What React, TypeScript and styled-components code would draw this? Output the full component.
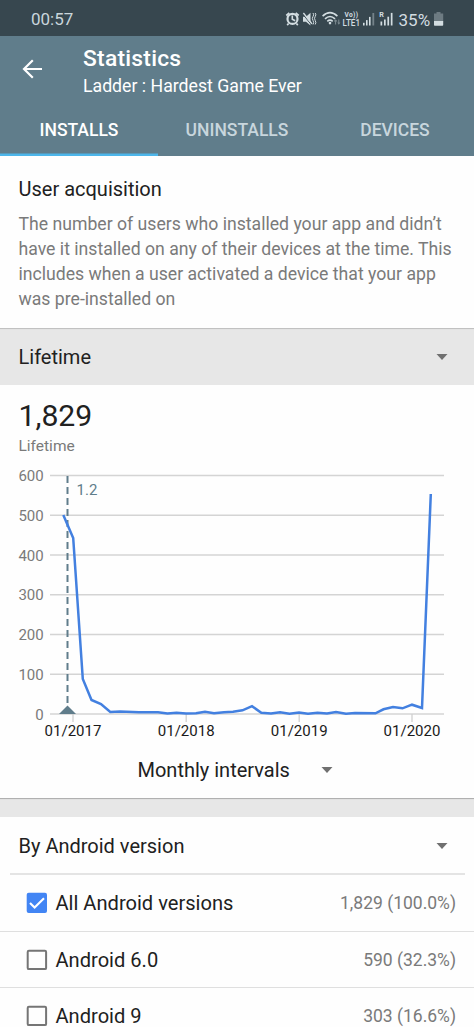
import React from "react";
import styled, { createGlobalStyle } from "styled-components";

const GlobalStyle = createGlobalStyle`
  * { box-sizing: border-box; }
  html, body { margin: 0; padding: 0; background: #fff; overflow: hidden; }
  body { font-family: Roboto, "Liberation Sans", sans-serif; color: #212121; }
`;

const Screen = styled.div`
  width: 474px;
  height: 1027px;
  overflow: hidden;
  display: flex;
  flex-direction: column;
  background: #fefefe;
`;

const StatusBar = styled.div`
  flex: none;
  height: 36px;
  background: #37474f;
  display: flex;
  align-items: center;
  justify-content: space-between;
  padding: 1px 29px 0 31px;
`;

const Clock = styled.span`
  font-size: 17px;
  color: #c9d6dc;
  padding-top: 1px;
`;

const Header = styled.header`
  flex: none;
  height: 120px;
  background: #607d8b;
  display: flex;
  flex-direction: column;
  justify-content: space-between;
  color: #fff;
`;

const TitleRow = styled.div`
  display: flex;
  padding: 8px 0 0 22px;
`;

const BackIcon = styled.svg`
  flex: none;
  margin: 14.5px 40px 0 0;
`;

const Titles = styled.div`
  display: flex;
  flex-direction: column;
`;

const Title = styled.h1`
  margin: 0;
  font-size: 22.8px;
  font-weight: 500;
  line-height: 29px;
  letter-spacing: 0.25px;
`;

const Subtitle = styled.div`
  font-size: 17.7px;
  line-height: 26px;
`;

const Tabs = styled.nav`
  display: grid;
  grid-template-columns: repeat(3, 1fr);
  height: 54px;
`;

const Tab = styled.div<{ $active?: boolean }>`
  height: 54px;
  text-align: center;
  font-size: 17.5px;
  font-weight: 500;
  line-height: 56px;
  color: ${(p) => (p.$active ? "#fff" : "#c8d6dd")};
  box-shadow: ${(p) => (p.$active ? "inset 0 -2.5px 0 #4db6ea" : "none")};
`;

const Acquisition = styled.section`
  flex: none;
  height: 172px;
  padding: 20px 0 0 18.5px;
`;

const Heading = styled.h2`
  margin: 0;
  font-size: 20px;
  font-weight: 400;
  line-height: 26px;
`;

const Description = styled.p`
  margin: 10px 0 0;
  font-size: 17.65px;
  line-height: 25px;
  color: #7a7a7a;
  white-space: nowrap;
`;

const RangePicker = styled.div`
  flex: none;
  height: 57px;
  background: #e7e7e7;
  box-shadow: inset 0 2px 1px -1px #bdbdbd;
  display: flex;
  align-items: center;
  justify-content: space-between;
  padding: 1px 26px 0 18.5px;
`;

const Summary = styled.section`
  flex: none;
  height: 75px;
  padding: 12px 0 0 18.5px;
`;

const Total = styled.div`
  font-size: 30.2px;
  line-height: 38px;
`;

const TotalLabel = styled.div`
  font-size: 15.5px;
  line-height: 22px;
  color: #7a7a7a;
`;

const Chart = styled.svg`
  flex: none;
  display: block;
  font-family: Roboto, "Liberation Sans", sans-serif;
`;

const IntervalPicker = styled.div`
  flex: none;
  height: 52px;
  display: flex;
  align-items: center;
  padding: 0 0 4px 137.5px;
  gap: 31px;
`;

const Divider = styled.div`
  flex: none;
  height: 19px;
  background: #e7e7e7;
  box-shadow: inset 0 2px 1px -1px #aaa;
`;

const VersionHeader = styled.div`
  flex: none;
  height: 58px;
  margin: 0 9px 0 10px;
  padding: 1px 17px 0 8.5px;
  border-bottom: 2px solid #e4e4e4;
  display: flex;
  align-items: center;
  justify-content: space-between;
`;

const VersionRow = styled.div`
  flex: none;
  height: 56.5px;
  border-bottom: 1px solid #dfdfdf;
  display: flex;
  align-items: center;
  padding: 1px 18px 0 26px;
`;

const VersionName = styled.span`
  margin-left: 7.5px;
  font-size: 20.1px;
  flex: 1;
`;

const VersionCount = styled.span`
  font-size: 17.5px;
  color: #7a7a7a;
`;

const Caret = () => (
  <svg width="12" height="6" viewBox="0 0 12 6">
    <path d="M0.5 0H11.5L6 6Z" fill="#707070" />
  </svg>
);

const Checkbox = ({ checked }: { checked?: boolean }) => (
  <svg width="22" height="22" viewBox="0 0 22 22">
    {checked ? (
      <>
        <rect x="0.7" y="0.7" width="20.3" height="20.3" rx="2" fill="#4285f4" />
        <path d="M4 11L8.6 15.6L18 6.2" fill="none" stroke="#fff" strokeWidth="2.1" />
      </>
    ) : (
      <rect x="1.7" y="1.7" width="18.4" height="18.4" rx="1.2" fill="none" stroke="#757575" strokeWidth="2" />
    )}
  </svg>
);

const StatusIcons = () => (
  <svg width="160" height="24" viewBox="285 6.5 160 24" fontFamily="Roboto, sans-serif" fill="#d3dde1">
    <circle cx="292.5" cy="18.4" r="5" fill="none" stroke="#d3dde1" strokeWidth="2.2" />
    <path d="M286.3 15L289.3 12.3M298.7 15L295.7 12.3M288.6 23L287.2 24.6M296.4 23L297.8 24.6" stroke="#d3dde1" strokeWidth="1.7" />
    <path d="M292.3 15V18.8L295.2 20.3" fill="none" stroke="#d3dde1" strokeWidth="1.6" />
    <path d="M303 16.2H306L310.5 12.2V25L306 21.2H303Z" />
    <path d="M302.7 13.4L311.6 24.6" stroke="#37474f" strokeWidth="1" />
    <path d="M303.4 12.5L312 23.4" stroke="#d3dde1" strokeWidth="1.4" />
    <path d="M313 12.5Q314.4 14.3 313 16T313 20T313 24M315.2 12.5Q316.6 14.3 315.2 16T315.2 20T315.2 24" fill="none" stroke="#d3dde1" strokeWidth="1" />
    <g fill="none" stroke="#d3dde1" strokeWidth="1.6">
      <path d="M322.6 15.6Q330 8.6 337.4 15.6" />
      <path d="M325 18.4Q330 13.6 335 18.4" />
      <path d="M327.3 20.8Q330 18.4 332.7 20.8" />
    </g>
    <circle cx="330" cy="22.6" r="1.3" />
    <path d="M334 20.5L335.6 18.8L337.2 20.5V21H336.1V24H335.1V21H334ZM337.3 22H338.3V19H339.3V22H340.4L338.8 24.2Z" opacity="0.45" />
    <text x="344.5" y="16.2" fontSize="6.6" fontWeight="700" textLength="13.5">Vo))</text>
    <text x="342.5" y="25" fontSize="8.6" fontWeight="500" textLength="17.5" lengthAdjust="spacingAndGlyphs">LTE1</text>
    <rect x="363" y="22.3" width="1.6" height="2.7" />
    <rect x="366" y="19.6" width="1.6" height="5.4" />
    <rect x="369" y="16.4" width="1.6" height="8.6" />
    <rect x="372.4" y="12.5" width="1.8" height="12.5" opacity="0.4" />
    <text x="379.2" y="16.6" fontSize="7.2" fontWeight="700">R</text>
    <rect x="380.5" y="21" width="1.7" height="4" />
    <rect x="384" y="19" width="1.7" height="6" />
    <rect x="387.4" y="16.2" width="1.7" height="8.8" />
    <rect x="390.8" y="12.4" width="1.7" height="12.6" />
    <text x="398.6" y="25" fontSize="17" textLength="31.5">35%</text>
    <path d="M436.5 11.5H440.5V13H443.2V21H434V13H436.5Z" opacity="0.35" />
    <path d="M434 20.5H443.2V24.5Q443.2 25.2 442.5 25.2H434.7Q434 25.2 434 24.5Z" />
  </svg>
);

const ticks = [600, 500, 400, 300, 200, 100, 0];
const months = [
  { x: 73, label: "01/2017" },
  { x: 186.2, label: "01/2018" },
  { x: 299.2, label: "01/2019" },
  { x: 412, label: "01/2020" },
];
const installs = [
  [63.3, 515], [73.2, 538], [82.8, 679], [91.5, 700], [101, 704], [110.3, 712], [120, 711.5],
  [139, 712.3], [158, 712.3], [167.5, 713.4], [176.5, 712.7], [186, 713.5], [196, 713.2],
  [205, 711.8], [214, 713.2], [224, 712.3], [233, 711.8], [242.5, 710.3], [252, 706.2],
  [261.3, 712.8], [271, 713.6], [280, 712.2], [289.5, 713.7], [299, 712.6], [308, 713.7],
  [317.5, 712.8], [327, 713.6], [336, 711.9], [346, 713.7], [355, 713.1], [375.5, 713.3],
  [383.5, 709.3], [393, 707], [402.5, 708.3], [412, 704.7], [422, 708], [430.8, 494],
];

const InstallsChart = () => (
  <Chart width="474" height="286" viewBox="0 460 474 286">
    {ticks.map((t) => {
      const y = 714 - t * 0.3975;
      return (
        <g key={t}>
          <line x1="50" x2="444" y1={y} y2={y} stroke="#d4d4d4" strokeWidth="1.6" />
          <text x="43.7" y={y + 5.5} fontSize="15" textAnchor="end" fill="#7a7a7a">{t}</text>
        </g>
      );
    })}
    {months.map((m) => (
      <g key={m.label}>
        <line x1={m.x} x2={m.x} y1="714" y2="722" stroke="#d0d0d0" strokeWidth="1.3" />
        <text x={m.x} y="736" fontSize="15" textAnchor="middle" fill="#1a1a1a">{m.label}</text>
      </g>
    ))}
    <line x1="67.5" x2="67.5" y1="476" y2="706" stroke="#607d8b" strokeWidth="2" strokeDasharray="7 4" />
    <path d="M59 714L67.5 705.5L76 714Z" fill="#607d8b" />
    <text x="76.6" y="495" fontSize="15" fill="#607d8b">1.2</text>
    <polyline points={installs.map((p) => p.join(",")).join(" ")} fill="none" stroke="#4380e0" strokeWidth="2.5" />
  </Chart>
);

const versions = [
  { name: "All Android versions", count: "1,829 (100.0%)", checked: true },
  { name: "Android 6.0", count: "590 (32.3%)" },
  { name: "Android 9", count: "303 (16.6%)" },
];

export default function App() {
  return (
    <Screen>
      <GlobalStyle />
      <StatusBar>
        <Clock>00:57</Clock>
        <StatusIcons />
      </StatusBar>
      <Header>
        <TitleRow>
          <BackIcon width="21" height="20" viewBox="0 0 21 20">
            <path d="M20 10H2.5M10.8 1.2L2 10L10.8 18.8" fill="none" stroke="#fff" strokeWidth="2.2" />
          </BackIcon>
          <Titles>
            <Title>Statistics</Title>
            <Subtitle>Ladder : Hardest Game Ever</Subtitle>
          </Titles>
        </TitleRow>
        <Tabs>
          <Tab $active>INSTALLS</Tab>
          <Tab>UNINSTALLS</Tab>
          <Tab>DEVICES</Tab>
        </Tabs>
      </Header>
      <Acquisition>
        <Heading>User acquisition</Heading>
        <Description>
          The number of users who installed your app and didn’t<br />
          have it installed on any of their devices at the time. This<br />
          includes when a user activated a device that your app<br />
          was pre-installed on
        </Description>
      </Acquisition>
      <RangePicker>
        <Heading>Lifetime</Heading>
        <Caret />
      </RangePicker>
      <Summary>
        <Total>1,829</Total>
        <TotalLabel>Lifetime</TotalLabel>
      </Summary>
      <InstallsChart />
      <IntervalPicker>
        <Heading>Monthly intervals</Heading>
        <Caret />
      </IntervalPicker>
      <Divider />
      <VersionHeader>
        <Heading>By Android version</Heading>
        <Caret />
      </VersionHeader>
      {versions.map((v) => (
        <VersionRow key={v.name}>
          <Checkbox checked={v.checked} />
          <VersionName>{v.name}</VersionName>
          <VersionCount>{v.count}</VersionCount>
        </VersionRow>
      ))}
    </Screen>
  );
}
